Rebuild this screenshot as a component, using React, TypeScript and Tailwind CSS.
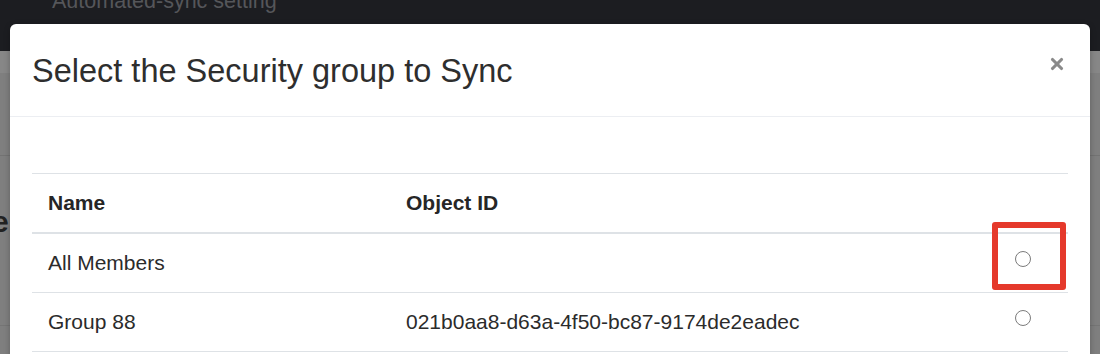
import { X } from 'lucide-react'

const rows = [
  { name: 'All Members', objectId: '', highlighted: true },
  { name: 'Group 88', objectId: '021b0aa8-d63a-4f50-bc87-9174de2eadec', highlighted: false },
]

const RadioDot = () => (
  <span className="block w-[16px] h-[16px] rounded-full border-[1.5px] border-[#7b7b7b] bg-white" />
)

export default function App() {
  return (
    <div className="relative w-[1100px] h-[354px] overflow-hidden bg-[#7f7f7f] font-['Liberation_Sans',Arial,sans-serif]">
      {/* page behind the backdrop */}
      <div className="h-[51px] overflow-hidden bg-[#1c1d21] pl-[52px]">
        <div className="mt-[-9px] text-[21.5px] leading-none text-[#55565a]">Automated-sync setting</div>
      </div>
      <div className="h-[22px] bg-[#878787]" />
      <div className="h-[83px] border-b border-[#737373]" />
      <div className="h-[51px]" />
      <div className="h-[30px] overflow-hidden text-[30px] font-bold leading-none text-[#222] ml-[-8px]">e</div>
      <div className="h-[89px] border-b border-[#757575]" />

      {/* modal */}
      <div className="absolute left-[10px] top-[24px] w-[1080px] h-[340px] bg-white rounded-t-[6px] shadow-[0_2px_6px_rgba(0,0,0,0.25)]">
        <div className="relative h-[93px] px-[22px] pt-[30px] border-b border-[#eceef2]">
          <h2 className="text-[32.5px] leading-[1.1] text-[#2e2e2e]">Select the Security group to Sync</h2>
          <button className="absolute right-[24px] top-[31px] text-[#8a8a8a]">
            <X size={18} strokeWidth={4.2} />
          </button>
        </div>

        <div className="px-[22px] pt-[56px]">
          <div className="border-t border-[#dee2e6] text-[21px] leading-[24px] text-[#2b2b2b]">
            <div className="grid grid-cols-[358px_1fr_90px] h-[60px] border-b-2 border-[#dee2e6] font-bold text-[#262626]">
              <div className="pl-[16px] pt-[17px]">Name</div>
              <div className="pl-[16px] pt-[17px]">Object ID</div>
              <div />
            </div>
            {rows.map((row) => (
              <div key={row.name} className="grid grid-cols-[358px_1fr_90px] h-[59px] border-b border-[#dee2e6]">
                <div className="pl-[16px] pt-[17px]">{row.name}</div>
                <div className="pl-[16px] pt-[17px]">{row.objectId}</div>
                <div className="relative flex justify-center pt-[17px]">
                  <RadioDot />
                  {row.highlighted && (
                    <span className="absolute left-[14px] top-[-12px] w-[74px] h-[68px] border-[6px] border-[#e5392b] rounded-[3px]" />
                  )}
                </div>
              </div>
            ))}
          </div>
        </div>
      </div>
    </div>
  )
}
